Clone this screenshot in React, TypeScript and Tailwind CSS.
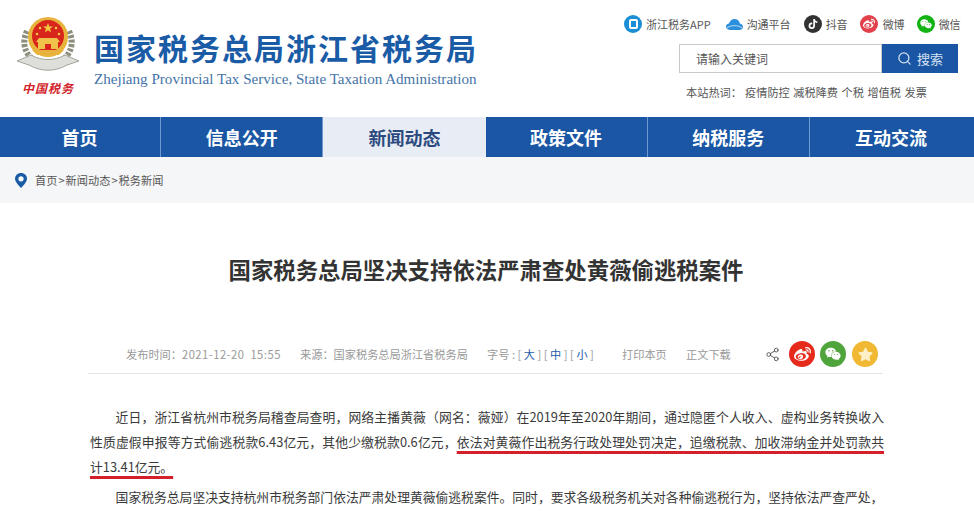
import { Search, Share2 } from "lucide-react";
import { FaTiktok, FaWeibo, FaWeixin, FaStar } from "react-icons/fa";

const font = { cjk: "font-['Noto_Sans_CJK_SC','Noto_Sans',sans-serif]" };

const navItems = ["首页", "信息公开", "新闻动态", "政策文件", "纳税服务", "互动交流"];
const hotWords = ["疫情防控", "减税降费", "个税", "增值税", "发票"];

function Emblem() {
  return (
    <svg width="62" height="54" viewBox="0 0 62 54">
      {/* wreath */}
      <path d="M10 14 C4 26 8 40 22 46" fill="none" stroke="#8d8f7c" strokeWidth="6" strokeDasharray="3 1.5" />
      <path d="M52 14 C58 26 54 40 40 46" fill="none" stroke="#8d8f7c" strokeWidth="6" strokeDasharray="3 1.5" />
      {/* ribbon */}
      <path d="M0 44 L14 38 C24 44 38 44 48 38 L62 44 L50 48 C38 55 24 55 12 48 Z" fill="#dededa" stroke="#a5a59c" strokeWidth="1" />
      {/* gold ring and red field */}
      <circle cx="31" cy="20" r="20" fill="#e8b33c" />
      <circle cx="31" cy="19" r="16" fill="#d8261c" />
      <polygon points="31,6 32.3,9.6 36,9.6 33,11.8 34.1,15.4 31,13.2 27.9,15.4 29,11.8 26,9.6 29.7,9.6" fill="#f5c842" />
      <circle cx="23" cy="11" r="1.3" fill="#f5c842" />
      <circle cx="39" cy="11" r="1.3" fill="#f5c842" />
      <circle cx="20" cy="17" r="1.3" fill="#f5c842" />
      <circle cx="42" cy="17" r="1.3" fill="#f5c842" />
      {/* gate */}
      <path d="M22 21 H40 L43 25 H19 Z" fill="#f0c24a" />
      <rect x="21" y="25" width="20" height="7" fill="#f0c24a" />
      <rect x="28" y="27" width="6" height="5" fill="#d8261c" />
      <path d="M15 33 H47 L42 38 H20 Z" fill="#e8b33c" />
    </svg>
  );
}

function CloudIcon() {
  return (
    <svg width="17" height="11" viewBox="0 0 17 11">
      <path d="M4 11 C1.5 11 0 9.4 0 7.6 C0 5.8 1.4 4.6 3 4.5 C3.8 2 6 0 8.6 0 C11.4 0 13.4 1.9 13.9 4.4 C15.7 4.7 17 6 17 7.8 C17 9.6 15.6 11 13.4 11 Z" fill="#2c8fdc" />
      <path d="M1 9 C5 5.8 12 5.8 16 9" fill="none" stroke="#bfe0f7" strokeWidth="1" />
    </svg>
  );
}

function SocialLink({ icon, label, gap }: { icon: React.ReactNode; label: string; gap: string }) {
  return (
    <div className={`flex items-center ${gap}`}>
      {icon}
      <span className="whitespace-nowrap text-[11px] leading-none text-[#555]">{label}</span>
    </div>
  );
}

function Circle({ className, children }: { className: string; children: React.ReactNode }) {
  return <span className={`flex items-center justify-center rounded-full text-white ${className}`}>{children}</span>;
}

export default function App() {
  return (
    <div className={`h-[511px] w-[974px] overflow-hidden bg-white ${font.cjk}`}>
      {/* Header */}
      <header className="flex h-[117px] justify-between">
        <div className="flex pl-[17px] pt-[17px]">
          <div className="flex w-[62px] flex-col items-center">
            <Emblem />
            <span className="mt-[9px] text-[12px] font-bold italic leading-[16px] tracking-[1px] text-[#d3232a]">中国税务</span>
          </div>
          <div className="ml-[15px] pt-[12px]">
            <h1 className="text-[30px] font-bold leading-[36px] tracking-[2px] text-[#1a5ba6]">国家税务总局浙江省税务局</h1>
            <p className="mt-[5px] whitespace-nowrap font-['Liberation_Serif',serif] text-[15.1px] leading-[18px] text-[#4474a8]">
              Zhejiang Provincial Tax Service, State Taxation Administration
            </p>
          </div>
        </div>

        <div className="flex w-[350px] flex-col pt-[15px]">
          <div className="flex h-[18px] items-center">
            <SocialLink
              gap="gap-[4px]"
              label="浙江税务APP"
              icon={
                <Circle className="h-[18px] w-[18px] bg-[#1c8ed6]">
                  <span className="h-[10px] w-[9px] rounded-[2px] border-2 border-white" />
                </Circle>
              }
            />
            <div className="ml-[15px]">
              <SocialLink gap="gap-[4px]" label="沟通平台" icon={<CloudIcon />} />
            </div>
            <div className="ml-[13px]">
              <SocialLink
                gap="gap-[4px]"
                label="抖音"
                icon={
                  <Circle className="h-[18px] w-[18px] bg-[#333]">
                    <FaTiktok className="text-[10px]" />
                  </Circle>
                }
              />
            </div>
            <div className="ml-[12px]">
              <SocialLink
                gap="gap-[5px]"
                label="微博"
                icon={
                  <Circle className="h-[18px] w-[18px] bg-[#e2404a]">
                    <FaWeibo className="text-[12px]" />
                  </Circle>
                }
              />
            </div>
            <div className="ml-[12px]">
              <SocialLink
                gap="gap-[4px]"
                label="微信"
                icon={
                  <Circle className="h-[18px] w-[18px] bg-[#12b312]">
                    <FaWeixin className="text-[12px]" />
                  </Circle>
                }
              />
            </div>
          </div>

          <div className="ml-[55px] mt-[11px] flex h-[29px] w-[279px]">
            <div className="flex flex-1 items-center border border-[#c9c9c9] pl-[16px] text-[12px] text-[#555]">请输入关键词</div>
            <div className="flex w-[76px] items-center justify-center gap-[5px] bg-[#1a56a4] text-[13px] text-[#d5e2f2]">
              <Search size={15} strokeWidth={2} />
              搜索
            </div>
          </div>

          <div className="ml-[62px] mt-[11px] flex items-center text-[11.2px] leading-[16px] text-[#555]">
            <span className="w-[59px]">本站热词：</span>
            <div className="flex gap-[3.5px]">
              {hotWords.map((w) => (
                <span key={w}>{w}</span>
              ))}
            </div>
          </div>
        </div>
      </header>

      {/* Nav */}
      <nav className="h-[40px] bg-[#1a56a4]">
        <div className="-ml-px grid h-full w-[973px] grid-cols-6">
          {navItems.map((item, i) => (
            <div
              key={item}
              className={`flex items-center justify-center text-[18px] font-bold ${
                i === 2 ? "bg-[#e8edf5] text-[#2c4a7e]" : "text-white"
              } ${i < 5 && i !== 2 ? "border-r border-[#6f9ad0]" : ""}`}
            >
              {item}
            </div>
          ))}
        </div>
      </nav>

      {/* Breadcrumb */}
      <div className="flex h-[46px] items-center gap-[8px] bg-[#f5f6f8] pl-[15px] text-[11.2px] text-[#555]">
        <svg width="12" height="15" viewBox="0 0 12 15">
          <path d="M6 0 C2.5 0 0 2.6 0 5.8 C0 9.5 6 15 6 15 C6 15 12 9.5 12 5.8 C12 2.6 9.5 0 6 0 Z" fill="#1a5ba6" />
          <circle cx="6" cy="5.8" r="2.6" fill="#fff" />
        </svg>
        <span className="flex gap-[1px]">
          首页<span>&gt;</span>新闻动态<span>&gt;</span>税务新闻
        </span>
      </div>

      {/* Article */}
      <main className="pl-[88px]">
        <h2 className="mt-[50px] w-[796px] text-center text-[22.4px] font-bold leading-[32px] text-[#333]">
          国家税务总局坚决支持依法严肃查处黄薇偷逃税案件
        </h2>

        <div className="mt-[52px] flex h-[37px] w-[795px] items-center border-b border-[#e4e4e4] pb-[2px] pl-[38px] text-[11.2px] text-[#999]">
          <span className="w-[174px] whitespace-nowrap">
            发布时间：<span className="tracking-[0.5px]">2021-12-20&nbsp;&nbsp;15:55</span>
          </span>
          <span className="w-[187px] whitespace-nowrap">来源：国家税务总局浙江省税务局</span>
          <span className="w-[135px] whitespace-nowrap">
            字号 : [ <span className="text-[#1a5ba6]">大</span> ] [ <span className="text-[#1a5ba6]">中</span> ] [ <span className="text-[#1a5ba6]">小</span> ]
          </span>
          <span className="w-[64px]">打印本页</span>
          <span className="w-[79px]">正文下载</span>
          <Share2 size={15} className="text-[#555]" strokeWidth={1.5} />
          <div className="ml-[9px] flex gap-[5px]">
            <Circle className="h-[26px] w-[26px] bg-[#e62a1c]">
              <FaWeibo className="text-[17px]" />
            </Circle>
            <Circle className="h-[26px] w-[26px] bg-[#4fa53c]">
              <FaWeixin className="text-[16px]" />
            </Circle>
            <Circle className="ml-[1px] h-[26px] w-[26px] bg-[#f0b833]">
              <FaStar className="text-[15px] text-[#fdf0c8]" />
            </Circle>
          </div>
        </div>

        <article className="ml-[2px] mt-[30px] w-[794px] text-justify text-[12.8px] leading-[25px] text-[#3a3a3a]">
          <p className="indent-[25.6px]">
            近日，浙江省杭州市税务局稽查局查明，网络主播黄薇（网名：薇娅）在2019年至2020年期间，通过隐匿个人收入、虚构业务转换收入性质虚假申报等方式偷逃税款6.43亿元，其他少缴税款0.6亿元，
            <span className="underline decoration-[#d4202a] decoration-[3px] underline-offset-[4px]">
              依法对黄薇作出税务行政处理处罚决定，追缴税款、加收滞纳金并处罚款共计13.41亿元。
            </span>
          </p>
          <p className="mt-[5px] indent-[25.6px]">
            国家税务总局坚决支持杭州市税务部门依法严肃处理黄薇偷逃税案件。同时，要求各级税务机关对各种偷逃税行为，坚持依法严查严处，
          </p>
        </article>
      </main>
    </div>
  );
}
